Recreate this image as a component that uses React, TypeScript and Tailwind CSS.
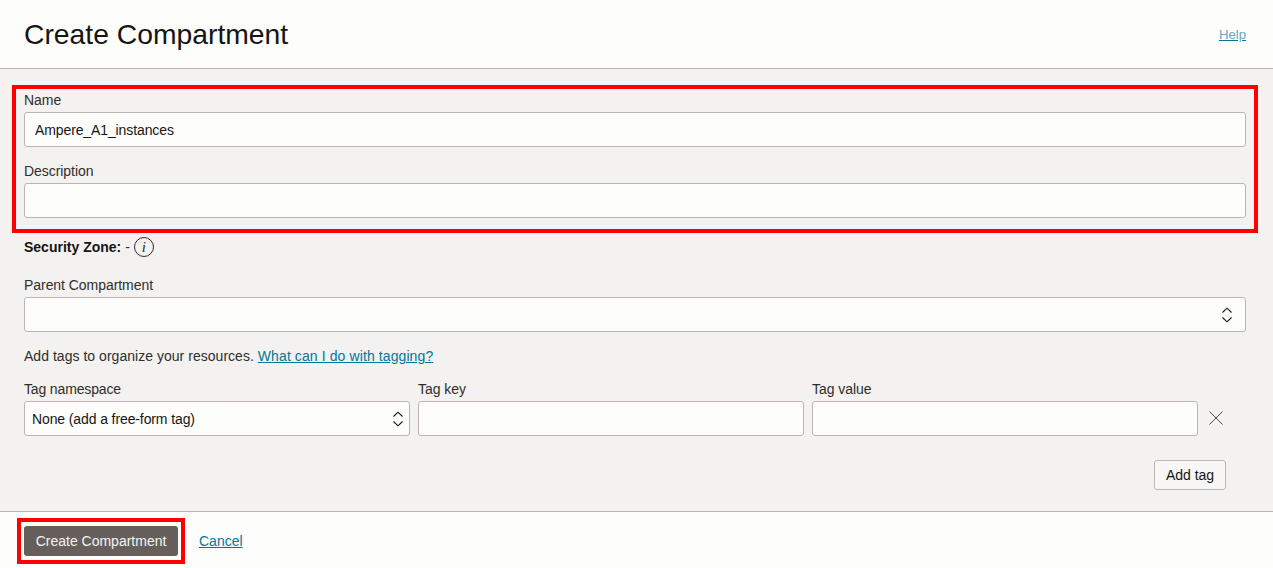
function Chevrons() {
  return (
    <svg width="12" height="16" viewBox="0 0 12 16" fill="none" stroke="#161513" strokeWidth="1.1">
      <path d="M1.5 5.5 L6 1.2 L10.5 5.5" />
      <path d="M1.5 10.5 L6 14.8 L10.5 10.5" />
    </svg>
  );
}

function Field({ label, value, className }: { label: string; value?: string; className?: string }) {
  return (
    <div className={className}>
      <label className="block h-[16px] leading-[16px] tracking-[-0.05px]">{label}</label>
      <div className="mt-[4px] flex h-[35px] items-center rounded-[3px] border border-[#bcb6b1] bg-[#fdfdfb] px-[10px] pt-[2px] tracking-[-0.11px] text-[#161513]">
        {value}
      </div>
    </div>
  );
}

export default function App() {
  return (
    <div className="relative flex h-[568px] flex-col overflow-hidden bg-[#fdfdfb] text-[14px] text-[#312d2a] [font-family:'Liberation_Sans',Arial,sans-serif]">
      {/* header */}
      <div className="flex h-[69px] flex-none items-center justify-between border-b border-[#bcb6b1] pl-[24px] pr-[27px]">
        <h1 className="text-[28.3px] leading-[34px] text-[#161513]">Create Compartment</h1>
        <a href="#" className="mt-[2px] text-[13.2px] text-[#67a6c0] underline decoration-[#04769b]">Help</a>
      </div>

      {/* form */}
      <div className="flex-1 bg-[#f3f2f1] px-[24px] pr-[27px] pt-[23px]">
        <Field label="Name" value="Ampere_A1_instances" />
        <Field label="Description" className="mt-[16px]" />

        <div className="mt-[17px] flex h-[24px] items-center gap-[4px]">
          <span><b className="font-bold text-[#161513]">Security Zone:</b> -</span>
          <span className="flex h-[20px] w-[20px] items-center justify-center rounded-full border border-[#312d2a] text-[15px] italic leading-none [font-family:'Liberation_Serif',serif]">i</span>
        </div>

        <div className="relative mt-[18px]">
          <Field label="Parent Compartment" />
          <div className="absolute bottom-[9px] right-[13px]"><Chevrons /></div>
        </div>

        <p className="mt-[16px] h-[16px] leading-[16px] tracking-[0.03px]">
          Add tags to organize your resources.{" "}
          <a href="#" className="tracking-[0.1px] text-[#04769b] underline">What can I do with tagging?</a>
        </p>

        <div className="mt-[17px] flex items-end">
          <div className="relative w-[386px]">
            <Field label="Tag namespace" value="None (add a free-form tag)" className="[&>div]:px-[7px] [&>label]:tracking-[-0.15px]" />
            <div className="absolute bottom-[9px] right-[6px]"><Chevrons /></div>
          </div>
          <Field label="Tag key" className="ml-[8px] w-[386px]" />
          <Field label="Tag value" className="ml-[8px] w-[386px]" />
          <div className="ml-[11px] flex h-[35px] items-center pb-[2px]">
            <svg width="14" height="14" viewBox="0 0 14 14" fill="none" stroke="#4f4a46" strokeWidth="1">
              <path d="M0.5 0.5 L13.5 13.5 M13.5 0.5 L0.5 13.5" />
            </svg>
          </div>
        </div>

        <div className="mt-[24px] flex justify-end pr-[20px]">
          <button className="h-[30px] w-[72px] rounded-[3px] border border-[#bcb6b1] bg-[#f8f7f6] tracking-[-0.05px] text-[#161513]">Add tag</button>
        </div>
      </div>

      {/* footer */}
      <div className="flex h-[57px] flex-none items-center gap-[21px] border-t border-[#bcb6b1] pl-[24px] pt-[2px]">
        <button className="h-[30px] w-[154px] rounded-[3px] bg-[#665f5b] text-[#f5f4f2]">Create Compartment</button>
        <a href="#" className="text-[#04769b] underline">Cancel</a>
      </div>

      {/* red highlight boxes drawn over the screenshot */}
      <div className="absolute left-[12px] top-[85px] h-[148px] w-[1246px] border-[4px] border-[#ff0000]" />
      <div className="absolute left-[17px] top-[518px] h-[46px] w-[168px] border-[4px] border-[#ff0000]" />
    </div>
  );
}
